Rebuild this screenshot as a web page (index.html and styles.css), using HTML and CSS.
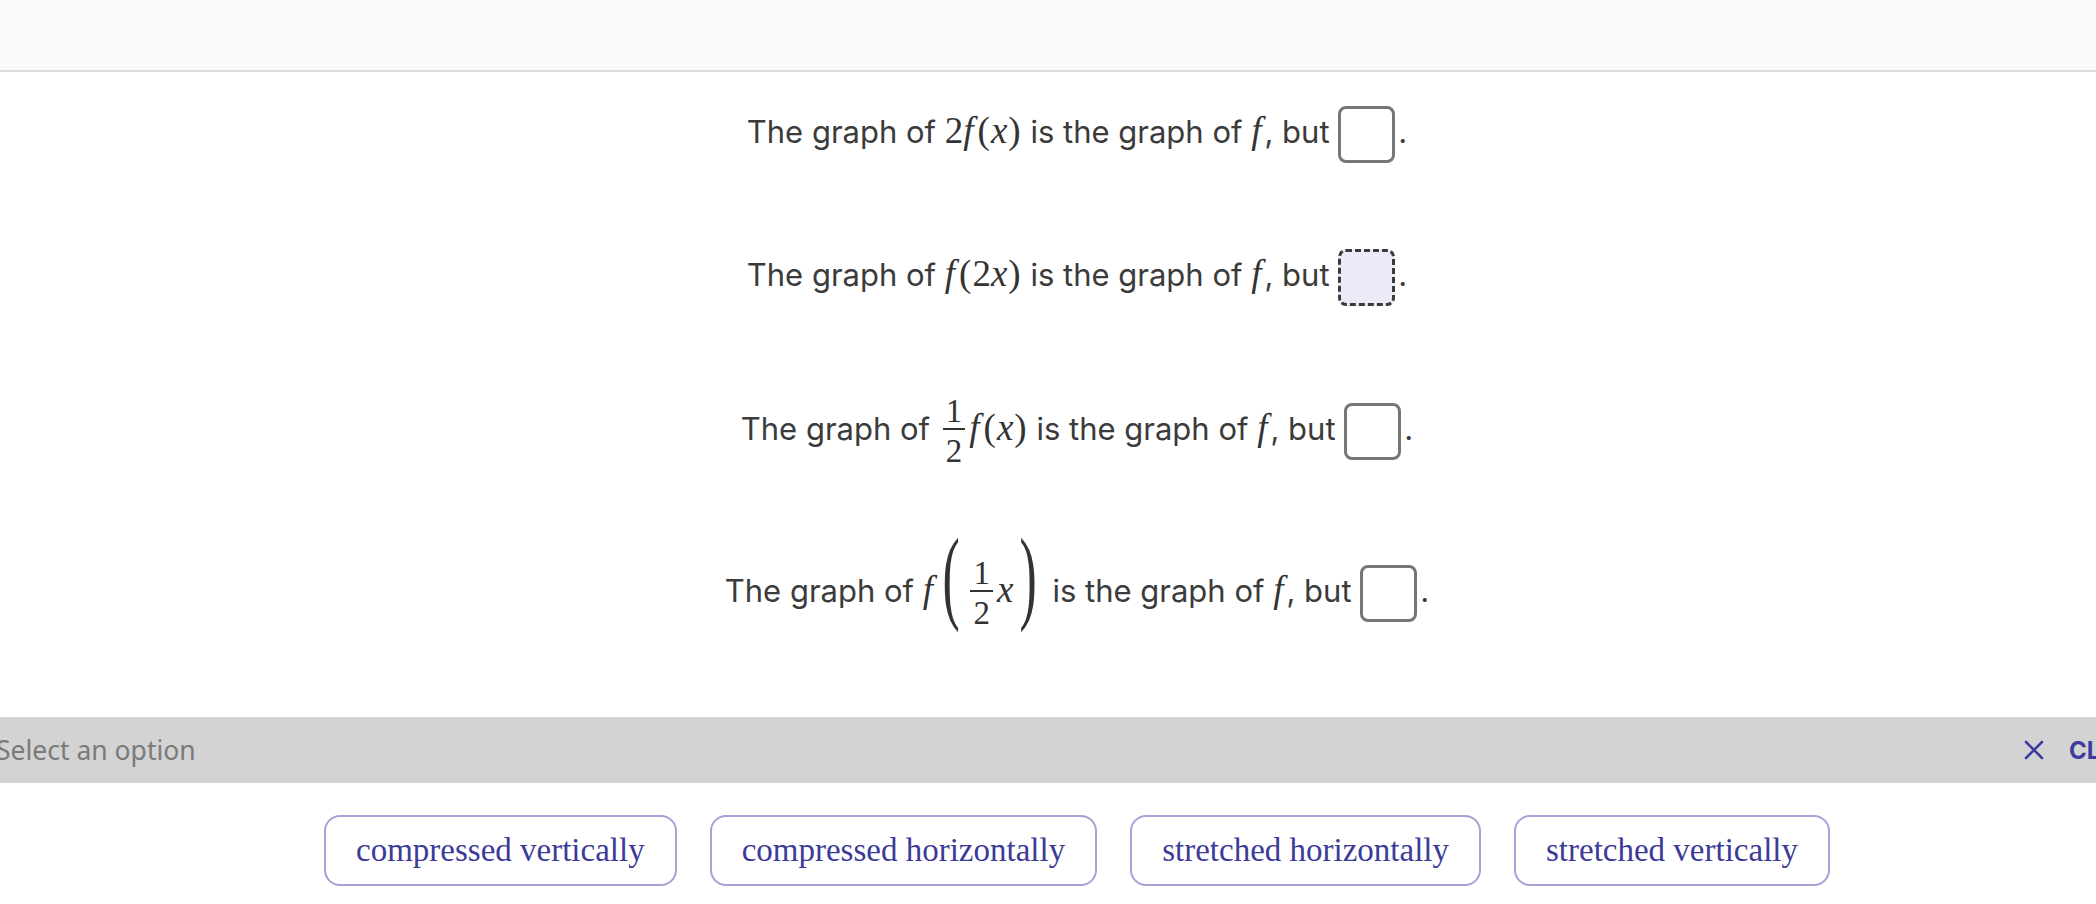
FILE: index.html
```html
<!DOCTYPE html>
<html lang="en">
<head>
<meta charset="utf-8">
<title>Transformations</title>
<link rel="stylesheet" href="styles.css">
</head>
<body>
<header class="topbar"></header>
<main class="page">
  <section class="questions">
    <div class="row">
      <p class="sentence">The graph of <span class="math"><span class="mn">2</span><span class="mi f">f</span><span class="mo">(</span><span class="mi">x</span><span class="mo">)</span></span> is the graph of <span class="math"><span class="mi f">f</span></span>, but <span class="blank"></span>.</p>
    </div>
    <div class="row">
      <p class="sentence">The graph of <span class="math"><span class="mi f">f</span><span class="mo">(</span><span class="mn">2</span><span class="mi">x</span><span class="mo">)</span></span> is the graph of <span class="math"><span class="mi f">f</span></span>, but <span class="blank blank--active"></span>.</p>
    </div>
    <div class="row row--frac">
      <p class="sentence">The graph of <span class="math"><span class="frac"><span class="num">1</span><span class="den">2</span></span><span class="mi f">f</span><span class="mo">(</span><span class="mi">x</span><span class="mo">)</span></span> is the graph of <span class="math"><span class="mi f">f</span></span>, but <span class="blank"></span>.</p>
    </div>
    <div class="row row--tall">
      <p class="sentence">The graph of <span class="math"><span class="mi f">f</span><span class="bigparen bigparen--left">(</span><span class="frac"><span class="num">1</span><span class="den">2</span></span><span class="mi">x</span><span class="bigparen bigparen--right">)</span></span> is the graph of <span class="math"><span class="mi f">f</span></span>, but <span class="blank"></span>.</p>
    </div>
  </section>

  <div class="select-bar">
    <span class="select-label">Select an option</span>
    <span class="clear">
      <svg class="clear-icon" width="20" height="20" viewBox="0 0 20 20" aria-hidden="true"><path d="M2 2 L18 18 M18 2 L2 18" stroke="#3d3b9e" stroke-width="2.6" stroke-linecap="round" fill="none"/></svg>
      <span class="clear-text">CLEAR</span>
    </span>
  </div>

  <div class="options">
    <button class="option">compressed vertically</button>
    <button class="option">compressed horizontally</button>
    <button class="option">stretched horizontally</button>
    <button class="option">stretched vertically</button>
  </div>
</main>
</body>
</html>
```
FILE: styles.css
```css
html, body {
  margin: 0;
  padding: 0;
}
body {
  width: 2096px;
  height: 904px;
  overflow: hidden;
  background: #ffffff;
  font-family: Inter, "Noto Sans", sans-serif;
  color: #3b3b3b;
}
.topbar {
  height: 70px;
  background: #fafafa;
  border-bottom: 2px solid #dedede;
}
.questions {
  display: flex;
  flex-direction: column;
  gap: 86px;
  padding: 34px 0 0 58px;
}
.row {
  display: flex;
  align-items: center;
  justify-content: center;
  min-height: 57px;
}
.row--frac {
  margin-top: 3px;
}
.row--tall {
  min-height: 84px;
  margin-top: -3px;
}
.sentence {
  margin: 0;
  font-size: 31px;
  line-height: 1;
  white-space: nowrap;
}
.math {
  font-family: "Liberation Serif", "Times New Roman", serif;
  font-size: 37px;
  color: #333333;
}
.mi {
  font-style: italic;
}
.f {
  margin-right: 3px;
}
.mo {
  margin: 0 1px;
}
.frac {
  display: inline-flex;
  flex-direction: column;
  align-items: center;
  font-size: 33px;
  vertical-align: 18px;
  margin: 0 4px;
}
.num {
  line-height: 1;
  padding: 0 3px;
}
.den {
  line-height: 1;
  padding: 5px 3px 0;
  border-top: 2px solid #333333;
  align-self: stretch;
  text-align: center;
}
.bigparen {
  display: inline-block;
  font-size: 37px;
  transform: scale(1.4, 2.8);
  transform-origin: 50% 72%;
  margin: 0 9px;
}
.blank {
  display: inline-block;
  box-sizing: border-box;
  width: 57px;
  height: 57px;
  border: 3px solid #767676;
  border-radius: 8px;
  vertical-align: middle;
  margin-right: 3px;
}
.blank--active {
  border: 3px dashed #3a3a3a;
  background: #ebeaf6;
}
.select-bar {
  display: flex;
  align-items: center;
  height: 66px;
  margin-top: 82px;
  background: #d3d3d3;
}
.select-label {
  margin-left: -4px;
  font-family: "Noto Sans", sans-serif;
  font-size: 26.5px;
  color: #7a7a7a;
}
.clear {
  margin-left: auto;
  width: 72px;
  flex-shrink: 0;
  display: flex;
  align-items: center;
  gap: 25px;
  white-space: nowrap;
}
.clear-icon {
  flex-shrink: 0;
}
.clear-text {
  font-family: Inter, sans-serif;
  font-weight: 700;
  font-size: 24px;
  color: #3d3b9e;
}
.options {
  display: flex;
  justify-content: center;
  gap: 33px;
  margin-top: 32px;
  padding-left: 58px;
}
.option {
  height: 71px;
  box-sizing: border-box;
  padding: 0 30px;
  border: 2px solid #a4a2d6;
  border-radius: 16px;
  background: #ffffff;
  font-family: "Liberation Serif", "Times New Roman", serif;
  font-size: 33px;
  color: #3c3b98;
}
```
